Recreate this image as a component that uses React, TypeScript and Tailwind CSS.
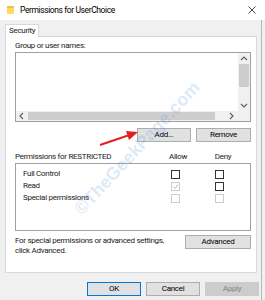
import React from "react";

function Chevron({ dir }: { dir: "up" | "down" | "left" | "right" }) {
  const paths: Record<string, string> = {
    up: "M1 5 L4 2 L7 5",
    down: "M1 2 L4 5 L7 2",
    left: "M5 1 L2 4 L5 7",
    right: "M2 1 L5 4 L2 7",
  };
  return (
    <svg width="8" height="8" viewBox="0 0 8 8" className="block">
      <path d={paths[dir]} fill="none" stroke="#606060" strokeWidth="1.2" />
    </svg>
  );
}

function Checkbox({ state }: { state: "normal" | "disabledChecked" | "disabled" }) {
  if (state === "normal") {
    return <div className="w-[9px] h-[9px] border border-[#333333] bg-white" />;
  }
  return (
    <div className="w-[9px] h-[9px] border border-[#cccccc] bg-white flex items-center justify-center">
      {state === "disabledChecked" && (
        <svg width="7" height="7" viewBox="0 0 7 7">
          <path d="M1 3.5 L3 5.5 L6 1.5" fill="none" stroke="#bcbcbc" strokeWidth="1" />
        </svg>
      )}
    </div>
  );
}

function Btn({ children, w, variant = "normal" }: { children: React.ReactNode; w: string; variant?: "normal" | "default" | "disabled" }) {
  const cls =
    variant === "default"
      ? "border-[#0078d7] bg-[#e1e1e1] text-black"
      : variant === "disabled"
      ? "border-[#cccccc] bg-[#cccccc] text-[#838383]"
      : "border-[#adadad] bg-[#e1e1e1] text-black";
  return (
    <div className={`h-[14px] border flex items-center justify-center ${w} ${cls}`}>
      {children}
    </div>
  );
}

export default function App() {
  return (
    <div className="w-[265px] h-[300px] bg-[#f0f0f0] relative overflow-hidden font-['Roboto',sans-serif] text-[8px] tracking-[-0.3px] leading-none text-[#1a1a1a]">
      {/* Title bar */}
      <div className="h-[20px] bg-white flex items-center">
        <svg width="7" height="8" viewBox="0 0 7 8" className="ml-[7px]">
          <rect x="0" y="0" width="7" height="8" fill="#f0c24b" />
          <rect x="0" y="2" width="7" height="6" fill="#ffd866" />
        </svg>
        <span className="ml-[6px] text-[8.5px] tracking-[-0.4px] text-black">Permissions for UserChoice</span>
        <svg width="8" height="8" viewBox="0 0 8 8" className="ml-auto mr-[9px]">
          <path d="M0.5 0.5 L7.5 7.5 M7.5 0.5 L0.5 7.5" stroke="#333" strokeWidth="0.9" />
        </svg>
      </div>

      {/* Tab */}
      <div className="pt-[4px] pl-[5px] flex">
        <div className="relative z-10 h-[13px] w-[34px] bg-white border border-b-0 border-[#d9d9d9] flex items-center pl-[3px] -mb-px">
          Security
        </div>
      </div>

      {/* Panel */}
      <div className="ml-[5px] w-[252px] h-[237px] bg-white border border-[#d9d9d9] pl-[9px] pt-[3px]">
        <div className="h-[11px] flex items-center">Group or user names:</div>
        <div className="mt-[1px] w-[236px] h-[70px] border border-[#a0a0a0] flex flex-col">
          <div className="flex flex-1">
            <div className="flex-1" />
            <div className="w-[12px] bg-[#f0f0f0] flex flex-col items-center">
              <div className="h-[11px] flex items-center justify-center"><Chevron dir="up" /></div>
              <div className="w-[10px] h-[23px] bg-[#cdcdcd]" />
              <div className="flex-1" />
              <div className="h-[11px] flex items-center justify-center"><Chevron dir="down" /></div>
            </div>
          </div>
          <div className="flex h-[10px]">
            <div className="flex-1 bg-[#f0f0f0] flex items-center">
              <div className="w-[12px] flex items-center justify-center"><Chevron dir="left" /></div>
              <div className="w-[187px] h-[8px] bg-[#cdcdcd]" />
              <div className="flex-1" />
              <div className="w-[12px] flex items-center justify-center"><Chevron dir="right" /></div>
            </div>
            <div className="w-[12px] bg-[#f0f0f0]" />
          </div>
        </div>

        <div className="mt-[6px] flex justify-end gap-[5px] w-[236px]">
          <Btn w="w-[54px]">Add...</Btn>
          <Btn w="w-[55px]">Remove</Btn>
        </div>

        <div className="mt-[9px] w-[236px] h-[11px] flex items-center">
          <span className="flex-1">Permissions for RESTRICTED</span>
          <span className="w-[18px] text-center mr-[27px]">Allow</span>
          <span className="w-[18px] text-center mr-[19px]">Deny</span>
        </div>

        <div className="mt-[1px] w-[236px] h-[68px] border border-[#a0a0a0] pt-[4px]">
          {[
            { label: "Full Control", a: "normal", d: "normal" },
            { label: "Read", a: "disabledChecked", d: "normal" },
            { label: "Special permissions", a: "disabled", d: "disabled" },
          ].map((r) => (
            <div key={r.label} className="h-[12px] flex items-center">
              <span className="flex-1 pl-[7px]">{r.label}</span>
              <div className="w-[9px] mr-[35px]"><Checkbox state={r.a as any} /></div>
              <div className="w-[9px] mr-[26px]"><Checkbox state={r.d as any} /></div>
            </div>
          ))}
        </div>

        <div className="mt-[4px] w-[236px] flex items-start">
          <div className="flex-1 leading-[10px] pt-[1px] whitespace-nowrap">
            For special permissions or advanced settings,
            <br />
            click Advanced.
          </div>
          <Btn w="w-[66px]">Advanced</Btn>
        </div>
      </div>

      {/* Bottom buttons */}
      <div className="mt-[9px] flex justify-end gap-[5px] pr-[6px]">
        <Btn w="w-[54px]" variant="default">OK</Btn>
        <Btn w="w-[54px]">Cancel</Btn>
        <Btn w="w-[54px]" variant="disabled">Apply</Btn>
      </div>

      {/* Window right border */}
      <div className="absolute left-[261px] top-[20px] w-px h-[280px] bg-[#b8b8b8]" />

      {/* Red arrow */}
      <svg className="absolute left-0 top-0" width="265" height="300" viewBox="0 0 265 300">
        <line x1="100" y1="145" x2="128" y2="135.5" stroke="#e3211b" strokeWidth="2" />
        <polygon points="138,132 126,131 129,140" fill="#e3211b" />
      </svg>

      {/* Watermark */}
      <div className="absolute left-[47px] top-[139px] w-[180px] text-center text-[18px] tracking-normal font-bold font-['Liberation_Sans',sans-serif] text-[#4a90d9]/20 rotate-[-47deg] whitespace-nowrap">
        ©TheGeekPage.com
      </div>
    </div>
  );
}
